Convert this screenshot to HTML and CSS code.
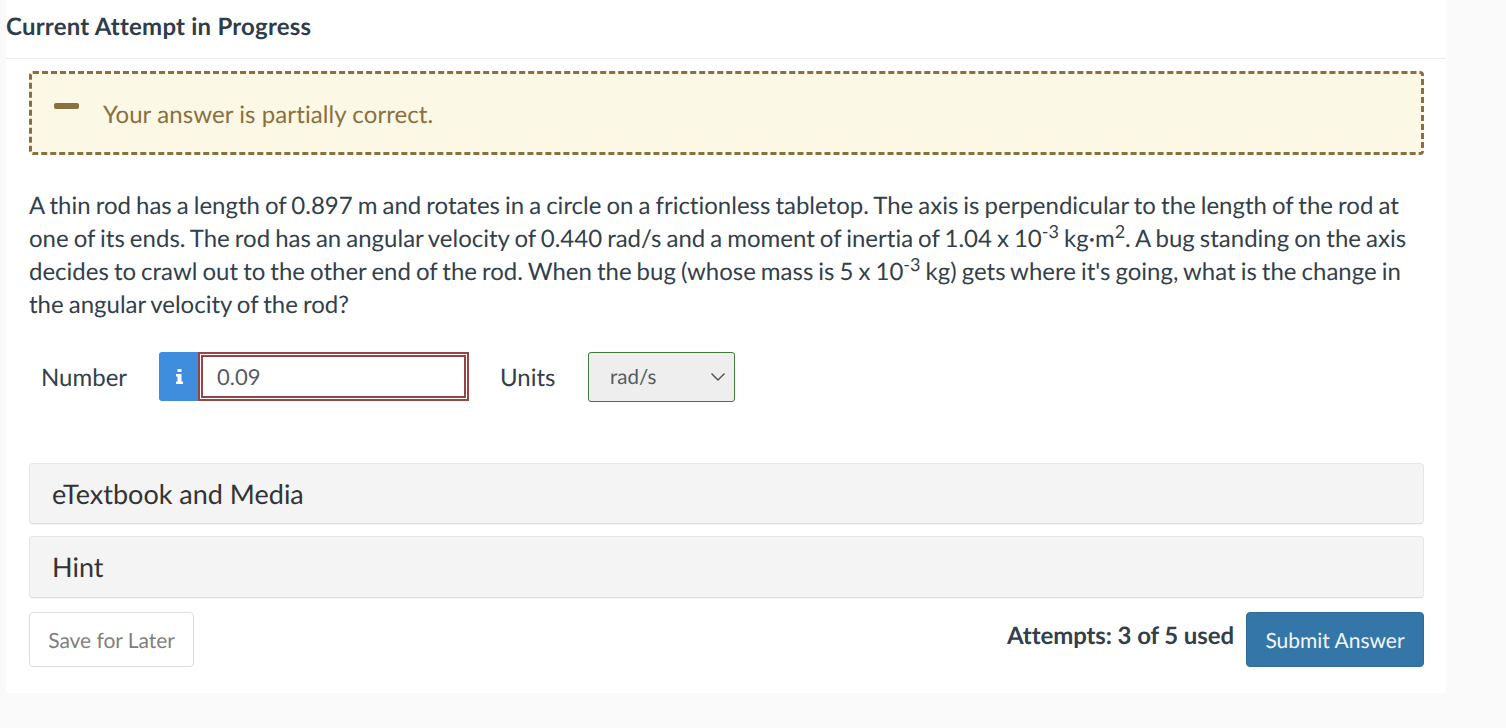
FILE: index.html
```html
<!DOCTYPE html>
<html lang="en">
<head>
<meta charset="utf-8">
<title>Current Attempt in Progress</title>
<link rel="stylesheet" href="styles.css">
</head>
<body>
<main class="card">
  <header class="card-head"><h1>Current Attempt in Progress</h1></header>
  <div class="card-body">
    <div class="alert">
      <span class="minus"></span>
      <span class="alert-text">Your answer is partially correct.</span>
    </div>
    <p class="question">A thin rod has a length of 0.897 m and rotates in a circle on a frictionless tabletop. The axis is perpendicular to the length of the rod at one of its ends. The rod has an angular velocity of 0.440 rad/s and a moment of inertia of 1.04 x 10<sup>-3</sup> kg·m<sup>2</sup>. A bug standing on the axis decides to crawl out to the other end of the rod. When the bug (whose mass is 5 x 10<sup>-3</sup> kg) gets where it's going, what is the change in the angular velocity of the rod?</p>
    <div class="answer">
      <span class="label number-label">Number</span>
      <span class="info">
        <svg width="9" height="15" viewBox="0 0 9 15"><path d="M2.5 0h4v3h-4zM1 5h5.5v7.5H8V15H1v-2.5h1.500V7.500H1z" fill="#fff"/></svg>
      </span>
      <input class="value" type="text" value="0.09" readonly>
      <span class="label units-label">Units</span>
      <span class="select-wrap">
        <select class="units"><option>rad/s</option></select>
        <svg class="chevron" width="16" height="10" viewBox="0 0 16 10"><path d="M1.500 1.500L8 8l6.500-6.500" fill="none" stroke="#4a4f55" stroke-width="1.400"/></svg>
      </span>
    </div>
    <div class="panel panel-first">eTextbook and Media</div>
    <div class="panel panel-second">Hint</div>
    <div class="actions">
      <button class="btn btn-save" type="button">Save for Later</button>
      <div class="actions-right">
        <span class="attempts">Attempts: 3 of 5 used</span>
        <button class="btn btn-submit" type="button">Submit Answer</button>
      </div>
    </div>
  </div>
</main>
</body>
</html>
```

FILE: styles.css
```css
* { box-sizing: border-box; }
html, body { margin: 0; height: 728px; overflow: hidden; }
body {
  background: #fafafa;
  font-family: Lato, "Liberation Sans", sans-serif;
  color: #333f4b;
  padding-left: 6px;
  text-rendering: geometricPrecision;
  font-variant-ligatures: none;
}
.card { width: 1440px; height: 693px; background: #fff; }
.card-head {
  height: 59px;
  border-bottom: 1px solid #eeeeee;
  display: flex;
  align-items: center;
}
.card-head h1 {
  margin: 0 0 5px;
  font-size: 24px;
  line-height: 30px;
  font-weight: 700;
  letter-spacing: .22px;
  color: #2f3d4b;
}
.card-body { padding: 12px 22px 0 23px; }
.alert {
  height: 84px;
  background: #fbf8e5;
  border: 3px dashed #8a7040;
  border-radius: 4px;
  display: flex;
  align-items: center;
  color: #8a7040;
  font-size: 24px;
  padding-left: 22px;
}
.alert-text { letter-spacing: .09px; padding-top: 2px; }
.minus {
  width: 25px;
  height: 6px;
  border-radius: 2px;
  background: #8a7040;
  margin: -14px 24px 0 0;
}
.question {
  margin: 34px 0 0;
  font-size: 24px;
  line-height: 33px;
  word-spacing: -1.1px;
  color: #333f4b;
  height: 131px;
}
sup { font-size: 18px; line-height: 0; vertical-align: baseline; position: relative; top: -9px; }
.answer { display: flex; align-items: center; margin-top: 32px; height: 49px; }
.label { font-size: 24px; color: #333f4b; padding-top: 2px; }
.number-label { margin-left: 12px; width: 118px; }
.info {
  width: 40px;
  height: 49px;
  background: #3f8edd;
  border-radius: 3px 0 0 3px;
  display: flex;
  align-items: center;
  justify-content: center;
}
.value {
  width: 271px;
  height: 49px;
  margin-left: -1px;
  border: 5px double #994444;
  padding: 0 14px;
  font: 22px Lato, sans-serif;
  text-rendering: geometricPrecision;
  color: #555b61;
  background: #fff;
  outline: none;
}
.units-label { margin-left: 31px; width: 88px; }
.select-wrap { position: relative; display: block; width: 147px; height: 50px; }
.units {
  width: 100%;
  height: 100%;
  appearance: none;
  background: #eeeeee;
  border: 1px solid #3f7a3a;
  border-radius: 3px;
  padding: 0 21px;
  font: 20.5px Lato, sans-serif;
  text-rendering: geometricPrecision;
  color: #555b61;
}
.chevron { position: absolute; right: 9px; top: 20px; pointer-events: none; }
.panel {
  height: 61px;
  background: #f4f4f4;
  border: 1px solid #e6e6e6;
  border-bottom: 1px solid #dcdcdc;
  border-radius: 4px;
  padding-left: 22px;
  font-size: 27px;
  line-height: 60px;
  color: #333;
  box-shadow: 0 1px 1px rgba(0,0,0,.04);
}
.panel-first { margin-top: 62px; }
.panel-second { margin-top: 12px; height: 62px; }
.actions { display: flex; justify-content: space-between; margin-top: 14px; }
.actions-right { display: flex; }
.btn { height: 55px; border-radius: 4px; font: 21px Lato, sans-serif; text-rendering: geometricPrecision; padding: 2px 0 0; }
.btn-save { width: 165px; background: #fff; border: 1px solid #dddddd; color: #7f7f7f; letter-spacing: -.05px; }
.btn-submit { width: 178px; background: #3476a8; border: 1px solid #2e6b99; color: #f2f7fb; }
.attempts { font-size: 24px; font-weight: 700; letter-spacing: -.1px; color: #333f4b; margin: 9px 12px 0 0; }
```
